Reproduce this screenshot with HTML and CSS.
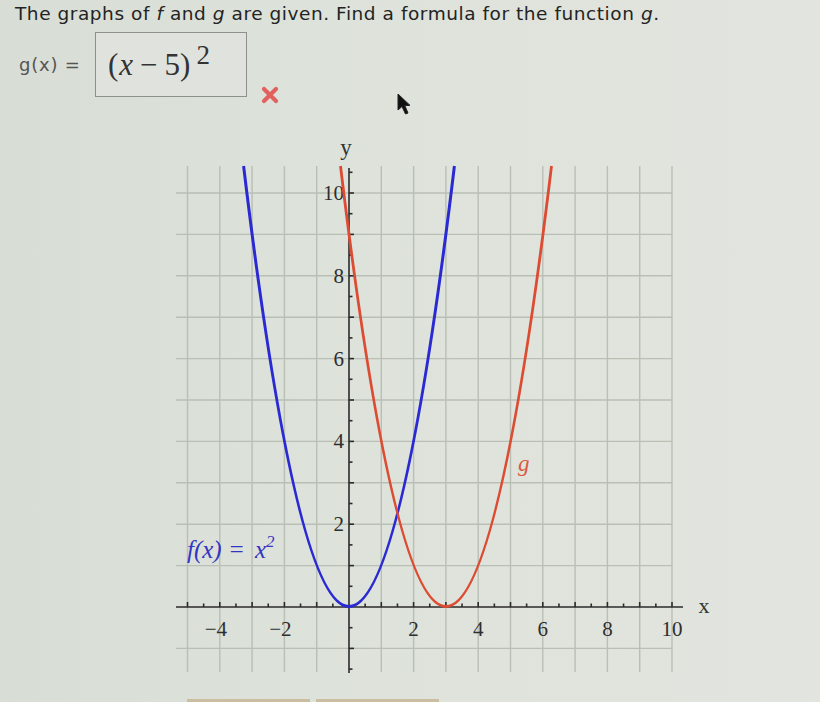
FILE: index.html
```html
<!DOCTYPE html>
<html>
<head>
<meta charset="utf-8">
<link rel="stylesheet" href="styles.css">
</head>
<body>
<div class="page">
  <p class="question">The graphs of <i>f</i> and <i>g</i> are given. Find a formula for the function <i>g</i>.</p>
  <div class="answer-row">
    <span class="label">g(x) =</span>
    <div class="answer-box"><span class="math">(<i>x</i><span class="op">−</span>5)</span><sup class="sup">2</sup></div>
    <svg class="wrong" width="18" height="18" viewBox="0 0 18 18">
      <path d="M3 3 L15 15 M15 3 L3 15" stroke="#e2605e" stroke-width="4.2" stroke-linecap="round"/>
    </svg>
  </div>
  <svg class="graph" width="560" height="545" viewBox="165 135 560 545" id="graph">
    <g id="grid" stroke="#b9bfb5" stroke-width="1.4"></g>
    <g id="axes" stroke="#2b2b2b" stroke-width="1.6"></g>
    <g id="labels" font-family="'Liberation Serif', serif" font-size="21" fill="#2e2e2e"></g>
    <path d="M243.6,166 Q349,1047 454.4,166" fill="none" stroke="#2a2ad4" stroke-width="3"/>
    <path d="M340.5,166 Q446,1047 551.5,166" fill="none" stroke="#dc4b32" stroke-width="2.8"/>
    <text x="346" y="155" font-family="'Liberation Serif', serif" font-size="23" fill="#333" text-anchor="middle">y</text>
    <text x="704" y="613" font-family="'Liberation Serif', serif" font-size="22" fill="#333" text-anchor="middle">x</text>
    <text y="558" font-family="'Liberation Serif', serif" font-size="25" font-style="italic" fill="#3434c4"><tspan x="187">f(x)</tspan><tspan x="228">=</tspan><tspan x="255">x</tspan><tspan dy="-11" font-size="17">2</tspan></text>
    <text x="518" y="471" font-family="'Liberation Serif', serif" font-size="23" font-style="italic" fill="#d95a40">g</text>
  </svg>
  <div class="bottom-strip"><span class="tab"></span><span class="tab"></span></div>
  <svg class="cursor" width="18" height="24" viewBox="0 0 18 24">
    <path d="M1 1 L1 17 L5 13.5 L8.5 21 L11 20 L7.8 12.6 L13 12.4 Z" fill="#111" stroke="#222" stroke-width="1"/>
  </svg>
</div>
<script>
(function(){
  var ns="http://www.w3.org/2000/svg";
  function X(u){return 349+32.3*u;}
  function Y(v){return 607-41.4*v;}
  function line(g,x1,y1,x2,y2){var l=document.createElementNS(ns,"line");l.setAttribute("x1",x1);l.setAttribute("y1",y1);l.setAttribute("x2",x2);l.setAttribute("y2",y2);g.appendChild(l);}
  function text(g,x,y,s,anchor){var t=document.createElementNS(ns,"text");t.setAttribute("x",x);t.setAttribute("y",y);t.setAttribute("text-anchor",anchor);t.textContent=s;g.appendChild(t);}
  var grid=document.getElementById("grid"),axes=document.getElementById("axes"),labels=document.getElementById("labels");
  for(var u=-5;u<=10;u++){ if(u!==0) line(grid,X(u),166,X(u),672); }
  for(var v=-1;v<=10;v++){ if(v!==0) line(grid,176,Y(v),672,Y(v)); }
  line(axes,176,Y(0),683,Y(0));
  line(axes,X(0),168,X(0),673);
  for(var k=-10;k<=20;k++){ var uu=k/2; if(uu===0) continue; var h=(k%2===0)?5:3.5; line(axes,X(uu),Y(0),X(uu),Y(0)-h); }
  for(var k=-3;k<=21;k++){ var vv=k/2; if(vv===0) continue; var h=(k%2===0)?5:3.5; line(axes,X(0),Y(vv),X(0)+h,Y(vv)); }
  [-4,-2,2,4,6,8,10].forEach(function(n){ text(labels,X(n)+(n<0?-4:0),636,(n<0?"\u2212"+(-n):String(n)),"middle"); });
  [2,4,6,8,10].forEach(function(n){ text(labels,X(0)-5,Y(n)+7,String(n),"end"); });
})();
</script>
</body>
</html>
```

FILE: styles.css
```css
html, body {
  margin: 0;
  padding: 0;
}
body {
  width: 820px;
  height: 702px;
  overflow: hidden;
  background: linear-gradient(90deg, #d8ddd5 0%, #dde2da 40%, #e2e5df 100%);
}
.page {
  position: relative;
  width: 820px;
  height: 702px;
}
.question {
  margin: 0;
  padding: 0 0 0 15px;
  height: 27px;
  line-height: 27px;
  font-family: "DejaVu Sans", Verdana, sans-serif;
  font-size: 18.5px;
  letter-spacing: 0.55px;
  color: #232323;
}
.question i {
  font-style: italic;
}
.answer-row {
  display: flex;
  align-items: center;
  margin-top: 5px;
  padding-left: 19px;
  height: 65px;
}
.label {
  font-family: "DejaVu Sans", Verdana, sans-serif;
  font-size: 18px;
  letter-spacing: 0.8px;
  color: #555;
  width: 76px;
}
.answer-box {
  box-sizing: border-box;
  width: 152px;
  height: 65px;
  border: 1.5px solid #8e918b;
  background: #e0e3dd;
  padding: 9px 0 0 12px;
  font-family: "Liberation Serif", serif;
  color: #333;
  display: flex;
  align-items: flex-start;
}
.math {
  font-size: 31px;
  line-height: 46px;
}
.math i {
  font-style: italic;
  margin: 0 2px 0 1px;
}
.op {
  margin: 0 7px 0 5px;
}
.sup {
  font-size: 27px;
  line-height: 22px;
  margin-left: 6px;
  margin-top: 2px;
}
.wrong {
  align-self: flex-end;
  margin-left: 14px;
  margin-bottom: -7px;
}
.graph {
  display: block;
  margin-left: 165px;
  margin-top: 38px;
}
.bottom-strip {
  display: flex;
  gap: 6px;
  margin-top: 19px;
  margin-left: 187px;
}
.tab {
  display: block;
  width: 123px;
  height: 4px;
  background: #cbbd9f;
}
.cursor {
  position: absolute;
  left: 397px;
  top: 93px;
}
```
